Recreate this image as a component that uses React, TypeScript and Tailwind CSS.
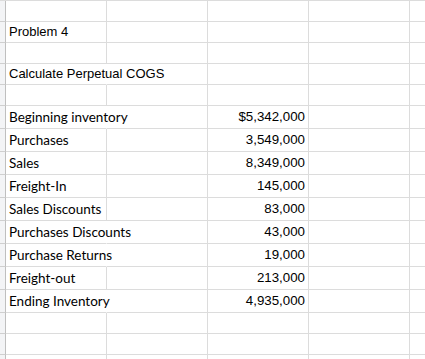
import React from "react";

type Row = { h: number; a?: string; c?: string; arialA?: boolean; overflow?: boolean };

const rows: Row[] = [
  { h: 21 },
  { h: 21, a: "Problem 4", arialA: true },
  { h: 21 },
  { h: 21, a: "Calculate Perpetual COGS", arialA: true, overflow: true },
  { h: 21 },
  { h: 23, a: "Beginning inventory", c: "$5,342,000", overflow: true },
  { h: 23, a: "Purchases", c: "3,549,000" },
  { h: 23, a: "Sales", c: "8,349,000" },
  { h: 23, a: "Freight-In", c: "145,000" },
  { h: 23, a: "Sales Discounts", c: "83,000" },
  { h: 23, a: "Purchases Discounts", c: "43,000", overflow: true },
  { h: 23, a: "Purchase Returns", c: "19,000", overflow: true },
  { h: 23, a: "Freight-out", c: "213,000" },
  { h: 23, a: "Ending Inventory", c: "4,935,000", overflow: true },
  { h: 21 },
  { h: 21 },
  { h: 21 },
];

export default function App() {
  return (
    <div className="w-[425px] h-[359px] overflow-hidden bg-white border-t border-[#dcdcdc]">
      {rows.map((r, i) => (
        <div
          key={i}
          className={`flex ${r.h === 23 ? "h-[23px]" : "h-[21px]"}`}
        >
          <div className="w-[6px] shrink-0 bg-[#f3f4f6] border-r border-b border-r-[#bfbfbf] border-b-[#cfcfcf]" />
          <div
            className={`w-[101px] shrink-0 border-b border-r border-b-[#dcdcdc] ${
              r.overflow ? "border-r-transparent" : "border-r-[#dcdcdc]"
            } relative flex items-center pl-[3px]`}
          >
            {r.a && (
              <span
                className={`whitespace-nowrap text-black relative z-10 ${
                  r.arialA ? "text-[13px]" : "text-[13.5px] pt-px"
                }`}
                style={{
                  fontFamily: r.arialA ? '"Liberation Sans", Arial, sans-serif' : 'Lato, "Noto Sans", sans-serif',
                }}
              >
                {r.a}
              </span>
            )}
          </div>
          <div className="w-[101px] shrink-0 border-b border-r border-[#dcdcdc]" />
          <div
            className="w-[101px] shrink-0 border-b border-r border-[#dcdcdc] flex items-center justify-end pr-[3px] text-[13.3px] text-black"
            style={{ fontFamily: '"Liberation Sans", Arial, sans-serif' }}
          >
            {r.c}
          </div>
          <div className="w-[101px] shrink-0 border-b border-r border-[#dcdcdc]" />
          <div className="flex-1 border-b border-[#dcdcdc]" />
        </div>
      ))}
    </div>
  );
}
